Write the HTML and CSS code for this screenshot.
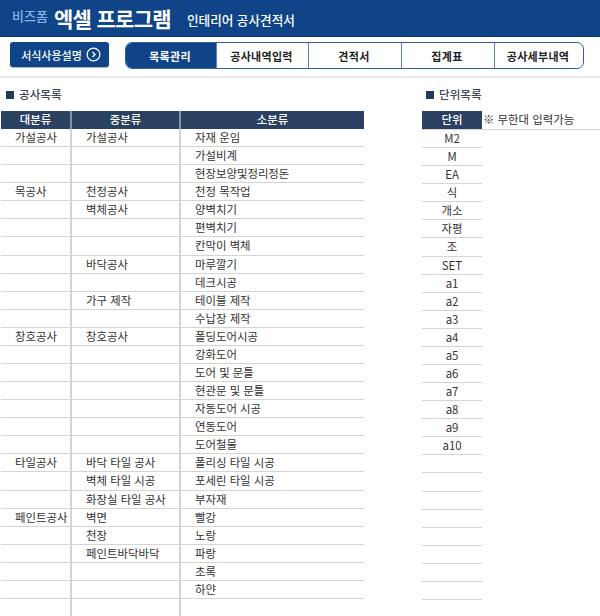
FILE: index.html
```html
<!DOCTYPE html>
<html lang="ko">
<head>
  <meta charset="UTF-8" />
  <meta name="viewport" content="width=device-width, initial-scale=1" />
  <title>인테리어 공사견적서</title>
  <link rel="stylesheet" href="styles.css">
</head>
<body>

  <header class="top-bar">
    <span class="brand">비즈폼</span>
    <span class="program">엑셀 프로그램</span>
    <span class="doc-title">인테리어 공사견적서</span>
  </header>

  <nav class="tool-bar">
    <button class="guide-btn">서식사용설명
      <svg class="guide-icon" viewBox="0 0 16 16" width="15" height="15">
        <circle cx="8" cy="8" r="6.8" fill="none" stroke="#fff" stroke-width="1.3" />
        <path d="M6.8 5.2 9.6 8 6.8 10.8" fill="none" stroke="#fff" stroke-width="1.5" />
      </svg>
    </button>
    <div class="tabs">
      <a class="tab tab-active">목록관리</a>
      <a class="tab tab-work">공사내역입력</a>
      <a class="tab tab-quote">견적서</a>
      <a class="tab tab-sum">집계표</a>
      <a class="tab tab-detail">공사세부내역</a>
    </div>
  </nav>

  <main class="lists">
    <section class="work-list">
      <h2 class="list-title">공사목록</h2>
      <div class="grid-row grid-head"><div>대분류</div><div>중분류</div><div>소분류</div></div>
      <div class="grid-row"><div>가설공사</div><div>가설공사</div><div>자재 운임</div></div>
      <div class="grid-row"><div></div><div></div><div>가설비계</div></div>
      <div class="grid-row"><div></div><div></div><div>현장보양및정리정돈</div></div>
      <div class="grid-row"><div>목공사</div><div>천정공사</div><div>천정 목작업</div></div>
      <div class="grid-row"><div></div><div>벽체공사</div><div>양벽치기</div></div>
      <div class="grid-row"><div></div><div></div><div>편벽치기</div></div>
      <div class="grid-row"><div></div><div></div><div>칸막이 벽체</div></div>
      <div class="grid-row"><div></div><div>바닥공사</div><div>마루깔기</div></div>
      <div class="grid-row"><div></div><div></div><div>데크시공</div></div>
      <div class="grid-row"><div></div><div>가구 제작</div><div>테이블 제작</div></div>
      <div class="grid-row"><div></div><div></div><div>수납장 제작</div></div>
      <div class="grid-row"><div>창호공사</div><div>창호공사</div><div>폴딩도어시공</div></div>
      <div class="grid-row"><div></div><div></div><div>강화도어</div></div>
      <div class="grid-row"><div></div><div></div><div>도어 및 문틀</div></div>
      <div class="grid-row"><div></div><div></div><div>현관문 및 문틀</div></div>
      <div class="grid-row"><div></div><div></div><div>자동도어 시공</div></div>
      <div class="grid-row"><div></div><div></div><div>연동도어</div></div>
      <div class="grid-row"><div></div><div></div><div>도어철물</div></div>
      <div class="grid-row"><div>타일공사</div><div>바닥 타일 공사</div><div>폴리싱 타일 시공</div></div>
      <div class="grid-row"><div></div><div>벽체 타일 시공</div><div>포세린 타일 시공</div></div>
      <div class="grid-row"><div></div><div>화장실 타일 공사</div><div>부자재</div></div>
      <div class="grid-row"><div>페인트공사</div><div>벽면</div><div>빨강</div></div>
      <div class="grid-row"><div></div><div>천장</div><div>노랑</div></div>
      <div class="grid-row"><div></div><div>페인트바닥바닥</div><div>파랑</div></div>
      <div class="grid-row"><div></div><div></div><div>초록</div></div>
      <div class="grid-row"><div></div><div></div><div>하얀</div></div>
      <div class="grid-row grid-last"><div></div><div></div><div></div></div>
    </section>

    <section class="unit-list">
      <h2 class="list-title">단위목록</h2>
      <div class="unit-head-row">
        <div class="unit-head">단위</div>
        <div class="unit-note">※ 무한대 입력가능</div>
      </div>
      <div class="unit">M2</div>
      <div class="unit">M</div>
      <div class="unit">EA</div>
      <div class="unit">식</div>
      <div class="unit">개소</div>
      <div class="unit">자평</div>
      <div class="unit">조</div>
      <div class="unit">SET</div>
      <div class="unit">a1</div>
      <div class="unit">a2</div>
      <div class="unit">a3</div>
      <div class="unit">a4</div>
      <div class="unit">a5</div>
      <div class="unit">a6</div>
      <div class="unit">a7</div>
      <div class="unit">a8</div>
      <div class="unit">a9</div>
      <div class="unit">a10</div>
      <div class="unit"></div>
      <div class="unit"></div>
      <div class="unit"></div>
      <div class="unit"></div>
      <div class="unit"></div>
      <div class="unit"></div>
      <div class="unit"></div>
      <div class="unit"></div>
    </section>
  </main>

</body>
</html>
```

FILE: styles.css
```css
* {
  box-sizing: border-box;
}
html, body {
  height: 616px;
  overflow: hidden;
}
body {
  margin: 0;
  background: #fff;
  color: #333;
  font-family: "Noto Sans CJK KR", "Noto Sans", sans-serif;
  font-size: 11.4px;
}

/* Header */
.top-bar {
  height: 37px;
  background: #0f4488;
  color: #fff;
  display: flex;
  align-items: center;
  padding-left: 12px;
  border-bottom: 1px solid #0b3268;
}
.brand {
  color: #8db4e8;
  font-size: 13px;
  font-weight: 500;
  width: 42px;
  margin-top: -6px;
}
.program {
  font-size: 21px;
  font-weight: 700;
  letter-spacing: -0.7px;
  width: 133px;
  white-space: nowrap;
}
.doc-title {
  font-size: 12.6px;
  font-weight: 500;
  margin-top: 2px;
  white-space: nowrap;
}

/* Button row */
.tool-bar {
  height: 41px;
  padding: 5px 0 0 10px;
  display: flex;
  align-items: flex-start;
  border-bottom: 2px solid #e6e8ec;
}
.guide-btn {
  width: 99px;
  height: 25px;
  margin-right: 16px;
  padding: 0 0 0 3px;
  border: none;
  border-radius: 3px;
  background: #0f4488;
  color: #fff;
  font: 500 11px "Noto Sans CJK KR", sans-serif;
  display: flex;
  align-items: center;
  justify-content: center;
  gap: 4px;
  box-shadow: 0 1px 1px rgba(0,0,0,0.3);
}
.tabs {
  width: 459px;
  height: 27px;
  display: flex;
  border: 1px solid #2f5f9f;
  border-radius: 7px;
  overflow: hidden;
}
.tab {
  display: flex;
  align-items: center;
  justify-content: center;
  padding-right: 2px;
  font-size: 11px;
  font-weight: 700;
  letter-spacing: 0.3px;
  color: #222;
  border-left: 1px solid #5f84b5;
}
.tab-active {
  width: 90px;
  background: #0f4488;
  color: #fff;
  border-left: none;
}
.tab-work { width: 92px; }
.tab-quote { width: 93px; }
.tab-sum { width: 93px; }
.tab-detail { flex: 1; }

/* Lists */
.lists {
  display: flex;
  height: 538px;
}
.list-title {
  margin: 0;
  height: 33px;
  padding: 8px 0 0 5px;
  font-size: 11.6px;
  font-weight: 500;
  color: #3c4658;
  display: flex;
  align-items: flex-start;
  gap: 5px;
  white-space: nowrap;
}
.list-title::before {
  content: "";
  width: 8px;
  height: 8px;
  margin-top: 5px;
  background: #223a60;
}
.work-list {
  width: 364px;
  padding-left: 1px;
  margin-right: 58px;
}
.grid-row {
  display: grid;
  grid-template-columns: 71px 109px 183px;
  height: 18.08px;
  line-height: 17px;
  border-bottom: 1px solid #d4d4d4;
}
.grid-row > div {
  padding-left: 14px;
  border-right: 2px solid #d4d4d4;
  white-space: nowrap;
}
.grid-row > div:last-child {
  border-right: none;
}
.grid-head {
  height: 18px;
  background: #2b4162;
  color: #fff;
  font-weight: 500;
  border-bottom: none;
}
.grid-head > div {
  padding-left: 0;
  text-align: center;
  border-right-color: #8292a8;
}
.grid-last {
  border-bottom: none;
}
.unit-list {
  width: 178px;
}
.unit-list .list-title {
  padding-left: 4px;
}
.unit-head-row {
  display: flex;
  height: 19px;
  line-height: 17px;
  width: 178px;
  border-bottom: 1px solid #d4d4d4;
}
.unit-head {
  width: 60px;
  background: #2b4162;
  color: #fff;
  font-weight: 500;
  text-align: center;
  height: 18px;
}
.unit-note {
  padding-left: 1px;
  white-space: nowrap;
}
.unit {
  width: 60px;
  height: 18.08px;
  line-height: 17px;
  text-align: center;
  border-bottom: 1px solid #d4d4d4;
}
```
